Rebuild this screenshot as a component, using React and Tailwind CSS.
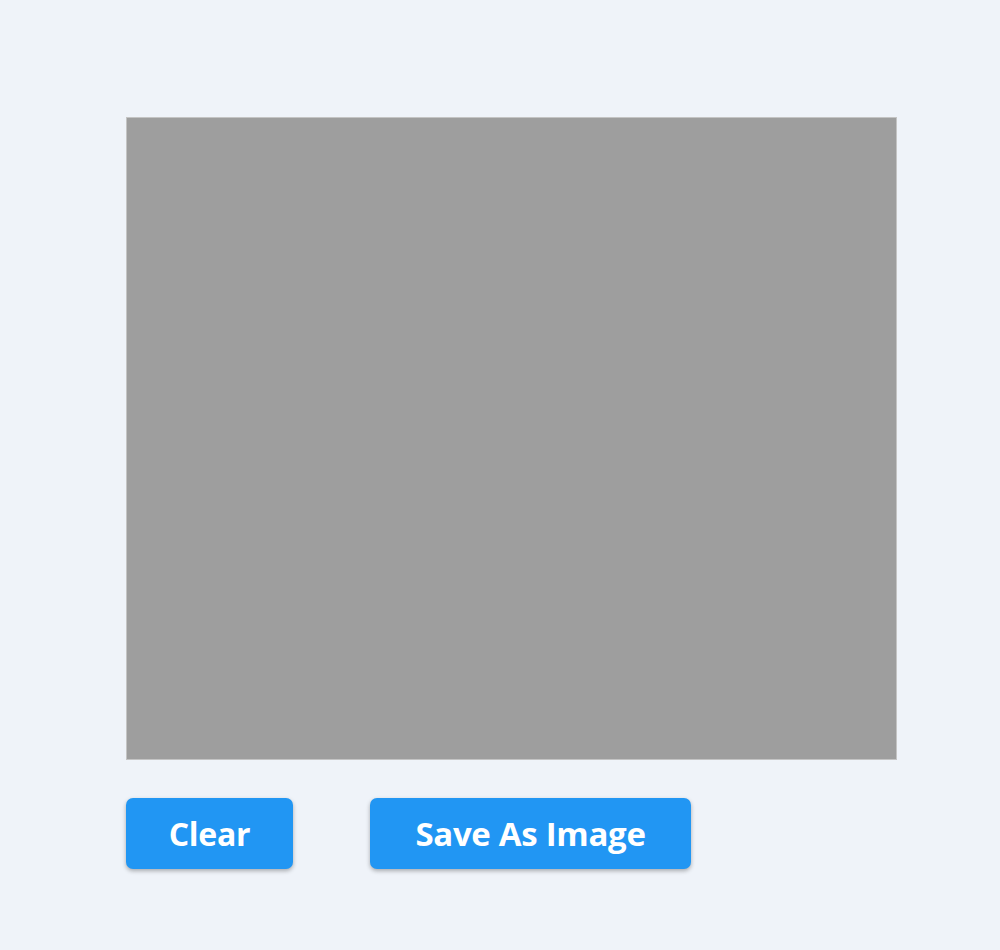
const App = () => {
    return (
        <div className="min-h-[950px] w-full bg-[#eff3f9] pt-[117px] pl-[126px]">
            {/* canvas */}
            <div className="w-[771px] h-[643px] bg-[#9e9e9e] border border-[#c4c4c4]"></div>

            {/* buttons */}
            <div className="flex gap-[77px] mt-[38px]">
                <button className="w-[167px] h-[71px] bg-[#2196f3] text-white rounded-[7px] shadow-[0_2px_4px_rgba(0,0,0,0.3)] font-['Open_Sans',sans-serif] font-bold text-[32px] tracking-[-0.3px]">
                    Clear
                </button>
                <button className="w-[321px] h-[71px] bg-[#2196f3] text-white rounded-[7px] shadow-[0_2px_4px_rgba(0,0,0,0.3)] font-['Open_Sans',sans-serif] font-bold text-[33px] tracking-[-0.3px]">
                    Save As Image
                </button>
            </div>
        </div>
    )
}

export default App
